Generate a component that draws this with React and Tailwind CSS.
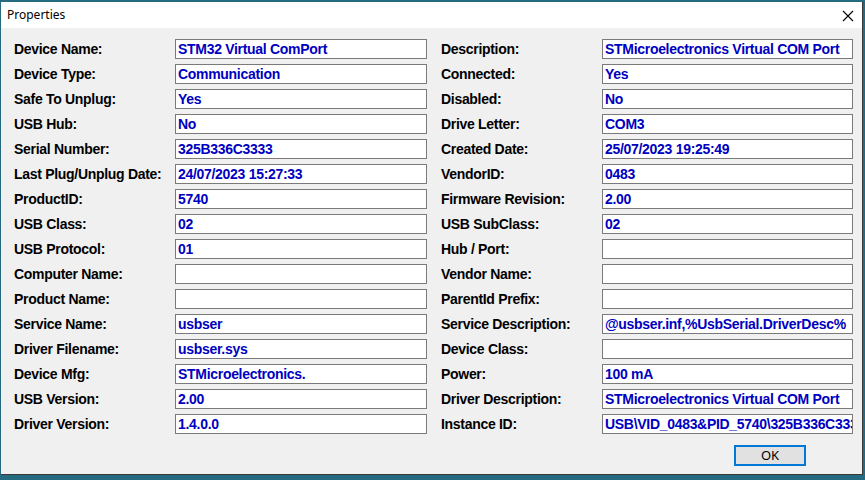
import React from "react";

const leftRows = [
  ["Device Name:", "STM32 Virtual ComPort"],
  ["Device Type:", "Communication"],
  ["Safe To Unplug:", "Yes"],
  ["USB Hub:", "No"],
  ["Serial Number:", "325B336C3333"],
  ["Last Plug/Unplug Date:", "24/07/2023 15:27:33"],
  ["ProductID:", "5740"],
  ["USB Class:", "02"],
  ["USB Protocol:", "01"],
  ["Computer Name:", ""],
  ["Product Name:", ""],
  ["Service Name:", "usbser"],
  ["Driver Filename:", "usbser.sys"],
  ["Device Mfg:", "STMicroelectronics."],
  ["USB Version:", "2.00"],
  ["Driver Version:", "1.4.0.0"],
];

const rightRows = [
  ["Description:", "STMicroelectronics Virtual COM Port"],
  ["Connected:", "Yes"],
  ["Disabled:", "No"],
  ["Drive Letter:", "COM3"],
  ["Created Date:", "25/07/2023 19:25:49"],
  ["VendorID:", "0483"],
  ["Firmware Revision:", "2.00"],
  ["USB SubClass:", "02"],
  ["Hub / Port:", ""],
  ["Vendor Name:", ""],
  ["ParentId Prefix:", ""],
  ["Service Description:", "@usbser.inf,%UsbSerial.DriverDesc%"],
  ["Device Class:", ""],
  ["Power:", "100 mA"],
  ["Driver Description:", "STMicroelectronics Virtual COM Port"],
  ["Instance ID:", "USB\\VID_0483&PID_5740\\325B336C3333"],
];

function Row({ label, value, boxW }) {
  return (
    <div className="flex items-center h-[20px]">
      <div className="w-[161px] shrink-0 text-[14px] tracking-[-0.3px] font-bold text-black leading-none whitespace-nowrap">
        {label}
      </div>
      <div
        className={`${boxW} shrink-0 h-[20px] border border-[#7a7a7a] bg-white pl-[2px] flex items-center overflow-hidden whitespace-nowrap text-[14px] tracking-[-0.3px] font-bold text-[#0000c0] leading-none`}
      >
        {value}
      </div>
    </div>
  );
}

export default function App() {
  return (
    <div
      className="w-[865px] h-[480px] bg-[#246a80] overflow-hidden pt-[2px] pl-[1px]"
      style={{ fontFamily: '"Liberation Sans", Arial, sans-serif' }}
    >
      <div className="w-[862px] h-[473px] flex flex-col border-r border-b border-[#3a3a3a] bg-[#f0f0f0]">
        <div className="h-[26px] bg-white flex items-center justify-between pl-[6px] pr-[8px] shrink-0">
          <span
            className="text-[12px] text-black"
            style={{ fontFamily: '"Noto Sans", "Open Sans", sans-serif' }}
          >
            Properties
          </span>
          <svg width="12" height="12" viewBox="0 0 12 12" className="mt-[1px]">
            <path d="M1 1 L11 11 M11 1 L1 11" stroke="#000" strokeWidth="1.1" />
          </svg>
        </div>
        <div className="flex-1 pt-[11px] pl-[13px] flex flex-col">
          <div className="flex">
            <div className="flex flex-col gap-[5px]">
              {leftRows.map(([l, v]) => (
                <Row key={l} label={l} value={v} boxW="w-[252px]" />
              ))}
            </div>
            <div className="flex flex-col gap-[5px] ml-[14px]">
              {rightRows.map(([l, v]) => (
                <Row key={l} label={l} value={v} boxW="w-[251px]" />
              ))}
            </div>
          </div>
          <div className="flex justify-end mt-[11px] pr-[56px]">
            <button
              className="w-[72px] h-[21px] border-2 border-[#0078d7] bg-[#e1e1e1] text-[13px] text-black flex items-center justify-center"
              style={{ fontFamily: '"Noto Sans", "Open Sans", sans-serif' }}
            >
              OK
            </button>
          </div>
        </div>
      </div>
    </div>
  );
}
